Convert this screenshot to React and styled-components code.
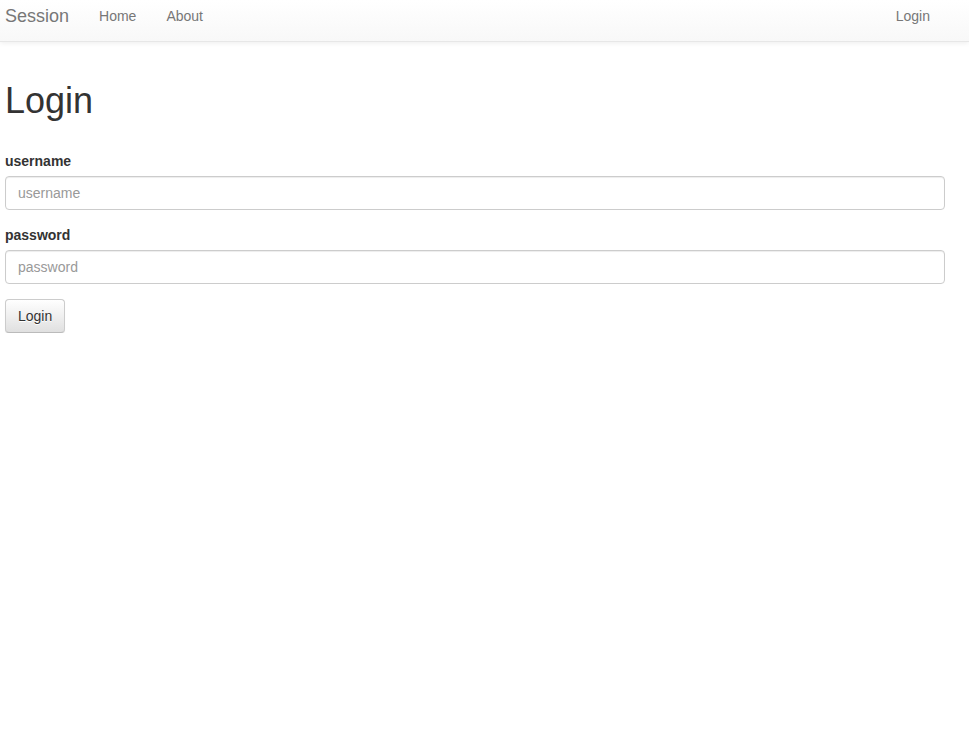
import React from "react";
import styled, { createGlobalStyle } from "styled-components";

const GlobalStyle = createGlobalStyle`
  * {
    box-sizing: border-box;
  }
  body {
    margin: 0;
    background: #fff;
    font-family: "Liberation Sans", Arial, sans-serif;
    font-size: 14px;
    line-height: 20px;
    color: #333;
  }
`;

const Navbar = styled.nav`
  display: flex;
  align-items: flex-start;
  height: 42px;
  padding-right: 24px;
  background-image: linear-gradient(to bottom, #ffffff 0%, #f8f8f8 100%);
  border-bottom: 1px solid #e7e7e7;
  box-shadow: inset 0 1px 0 rgba(255, 255, 255, 0.15), 0 1px 5px rgba(0, 0, 0, 0.075);
`;

const Brand = styled.a`
  padding: 6px 15px 0 5px;
  font-size: 18px;
  line-height: 20px;
  color: #777;
  text-decoration: none;
`;

const NavList = styled.ul`
  display: flex;
  margin: 0;
  padding: 0;
  list-style: none;
  margin-left: ${(props) => (props.right ? "auto" : "0")};
`;

const NavLink = styled.a`
  display: block;
  padding: 6px 15px 0;
  line-height: 20px;
  color: #777;
  text-decoration: none;
`;

const Main = styled.main`
  width: 945px;
  padding-left: 5px;
`;

const Title = styled.h1`
  margin: 39px 0 30px;
  font-size: 36px;
  font-weight: 500;
  line-height: 1.1;
  color: #333;
`;

const FormGroup = styled.div`
  margin-bottom: 15px;
`;

const Label = styled.label`
  display: block;
  margin-bottom: 5px;
  font-weight: 700;
`;

const Input = styled.input`
  display: block;
  width: 100%;
  height: 34px;
  padding: 6px 12px;
  font-family: inherit;
  font-size: 14px;
  line-height: 20px;
  color: #555;
  background: #fff;
  border: 1px solid #ccc;
  border-radius: 4px;
  box-shadow: inset 0 1px 1px rgba(0, 0, 0, 0.075);
  outline: none;

  &::placeholder {
    color: #999;
  }
`;

const Button = styled.button`
  height: 34px;
  padding: 6px 12px;
  font-family: inherit;
  font-size: 14px;
  line-height: 20px;
  color: #333;
  text-shadow: 0 1px 0 #fff;
  background-image: linear-gradient(to bottom, #ffffff 0%, #e0e0e0 100%);
  border: 1px solid #ccc;
  border-color: #ccc #ccc #bbb;
  border-radius: 4px;
  box-shadow: inset 0 1px 0 rgba(255, 255, 255, 0.15), 0 1px 1px rgba(0, 0, 0, 0.075);
  cursor: pointer;
`;

export default () => (
  <>
    <GlobalStyle />
    <Navbar>
      <Brand href="#">Session</Brand>
      <NavList>
        <li>
          <NavLink href="#">Home</NavLink>
        </li>
        <li>
          <NavLink href="#">About</NavLink>
        </li>
      </NavList>
      <NavList right>
        <li>
          <NavLink href="#">Login</NavLink>
        </li>
      </NavList>
    </Navbar>
    <Main>
      <Title>Login</Title>
      <form onSubmit={(e) => e.preventDefault()}>
        <FormGroup>
          <Label htmlFor="username">username</Label>
          <Input id="username" type="text" placeholder="username" />
        </FormGroup>
        <FormGroup>
          <Label htmlFor="password">password</Label>
          <Input id="password" type="password" placeholder="password" />
        </FormGroup>
        <Button type="submit">Login</Button>
      </form>
    </Main>
  </>
);
